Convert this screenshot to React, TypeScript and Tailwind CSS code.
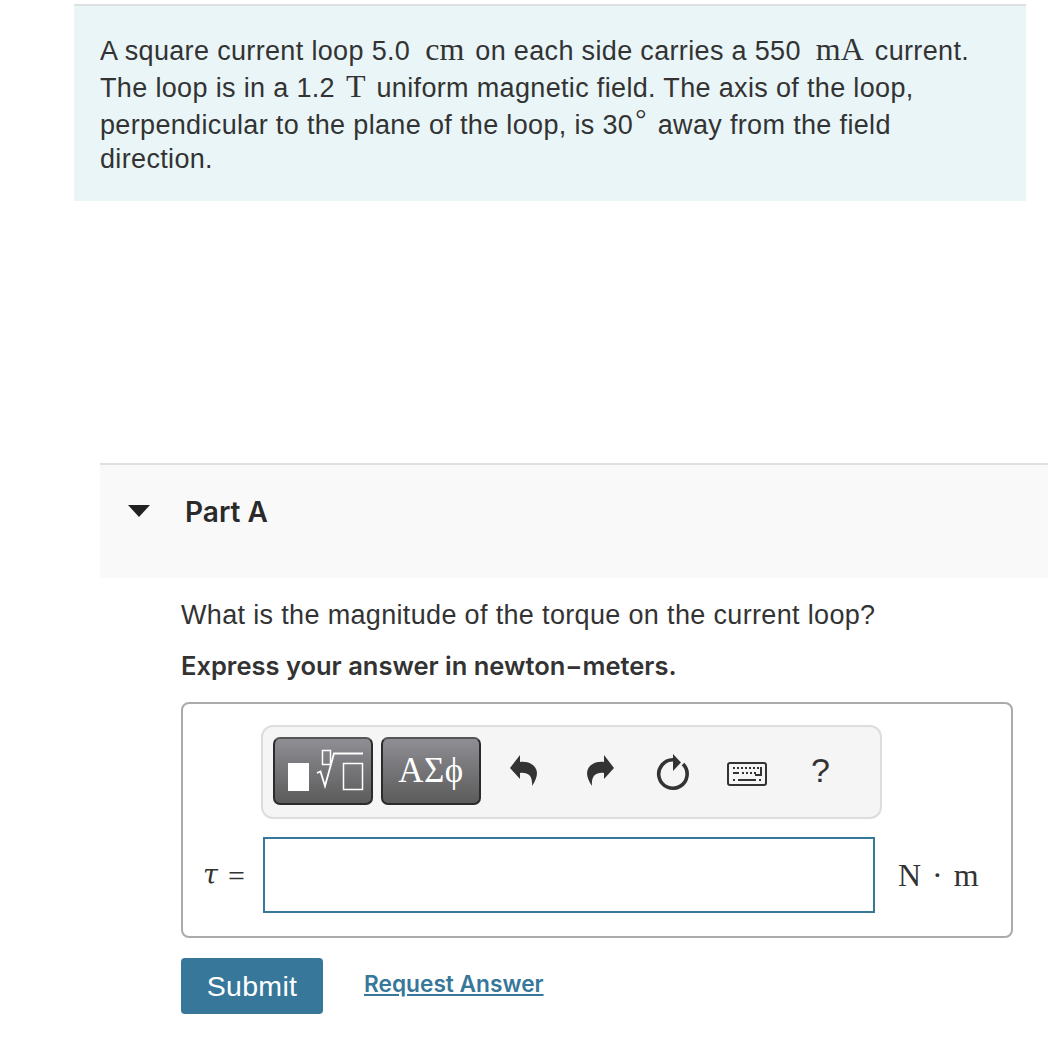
const sans = "font-['Liberation_Sans',Arial,sans-serif]";
const medium = "font-['Inter',sans-serif] font-semibold tracking-normal";
const Unit = ({ children, className = "" }: { children: React.ReactNode; className?: string }) => (
  <span className={`font-['Liberation_Serif',serif] text-[32px] leading-none tracking-normal ${className}`}>{children}</span>
);

function MathIcon() {
  return (
    <svg width="96" height="64" viewBox="0 0 96 64" fill="none" className="block">
      <rect x="13" y="24" width="21" height="28" fill="#fff" />
      <rect x="47.5" y="11.5" width="8" height="14" stroke="#fff" strokeWidth="1.5" />
      <path d="M42 34 L45.5 32.5 L50 47 L59 14.5 H88" stroke="#fff" strokeWidth="1.8" />
      <rect x="68.5" y="24.5" width="19" height="26" stroke="#fff" strokeWidth="1.5" />
    </svg>
  );
}

function Arrow({ flip = false, className = "" }: { flip?: boolean; className?: string }) {
  return (
    <svg width="27" height="31" viewBox="0 0 27 31" className={`block ${flip ? "-scale-x-100" : ""} ${className}`}>
      <path d="M10 0 L0 13 L10 24 V18 C18 17 23 21 22 31 C27 24 28 18 26 14 C24 9 17 6 10 7 Z" fill="#333" />
    </svg>
  );
}

function Refresh() {
  return (
    <svg width="34" height="38" viewBox="0 0 34 38" fill="none" className="block">
      <path d="M17 6.8 A14.2 14.2 0 1 0 27 11" stroke="#333" strokeWidth="3.6" />
      <path d="M17 1 L25 9.5 L17 18 Z" fill="#333" />
    </svg>
  );
}

function Keyboard() {
  const row = (y: number, xs: number[]) =>
    xs.map((x) => <rect key={`${x}-${y}`} x={x} y={y} width="2" height="2" fill="#333" />);
  return (
    <svg width="40" height="24" viewBox="0 0 40 24" fill="none" className="block">
      <rect x="1" y="1" width="38" height="22" rx="2" stroke="#333" strokeWidth="2" />
      {row(5, [6, 10, 14, 18, 22, 26, 30])}
      <rect x="6" y="10" width="6" height="2" fill="#333" />
      {row(10, [15, 19, 23, 27])}
      <rect x="33" y="5" width="2" height="8" fill="#333" />
      <rect x="28" y="12" width="7" height="2" fill="#333" />
      <rect x="6" y="17" width="2" height="2" fill="#333" />
      <rect x="11" y="17" width="18" height="2" fill="#333" />
      <rect x="32" y="17" width="2" height="2" fill="#333" />
    </svg>
  );
}

const btn =
  "w-[100px] h-[68px] mb-[2px] rounded-[7px] border-2 border-[#2b2b2b] border-t-[#555] bg-gradient-to-b from-[#8e8e94] to-[#5c5c5c] flex items-center justify-center";

export default function App() {
  return (
    <div className={`w-[1048px] h-[1060px] bg-white text-[#333] text-[27px] tracking-[0.34px] overflow-hidden ${sans}`}>
      <div className="pt-1 pl-[74px] pr-[22px]">
        <div className="h-[197px] border-t-2 border-[#e0e0e0] bg-[#e9f5f7] pl-[26px] pt-[27px] leading-[37px]">
          <div className="h-[37px] whitespace-nowrap">A square current loop 5.0<Unit className="ml-[15px] mr-[11px]">cm</Unit>on each side carries a 550<Unit className="ml-[15px] mr-[11px]">mA</Unit>current.</div>
          <div className="h-[37px] whitespace-nowrap">The loop is in a 1.2<Unit className="mx-[11px]">T</Unit>uniform magnetic field. The axis of the loop,</div>
          <div className="h-[34px] whitespace-nowrap">perpendicular to the plane of the loop, is 30<span className="relative -top-[6px] ml-[2px] mr-[11px] text-[28px] leading-none font-['Liberation_Serif',serif]">°</span>away from the field</div>
          <div className="h-[34px] whitespace-nowrap">direction.</div>
        </div>
      </div>

      <div className="mt-[262px] ml-[100px] h-[115px] border-t-2 border-[#e0e0e0] bg-[#f9f9f9] flex items-start pt-[29px]">
        <div className="ml-[28px] mt-[11px] w-0 h-0 border-x-[11px] border-x-transparent border-t-[12px] border-t-[#222]" />
        <div className={`ml-[35px] text-[#2a2a2a] leading-[36px] text-[28px] ${medium}`}>Part A</div>
      </div>

      <div className="ml-[181px] w-[832px]">
        <div className="mt-[18px] leading-[38px] h-[38px]">What is the magnitude of the torque on the current loop?</div>
        <div className={`mt-[13px] leading-[38px] h-[38px] text-[25.5px] ${medium}`}>Express your answer in newton−meters.</div>

        <div className="mt-[17px] h-[236px] border-2 border-[#aaa] rounded-[8px] pt-[21px] pl-[78px]">
          <div className="w-[621px] h-[94px] border-2 border-[#ddd] rounded-[12px] bg-[#f5f5f5] flex items-center pl-[10px] text-[#333]">
            <div className={btn}><MathIcon /></div>
            <div className={`${btn} ml-[8px] text-white font-['Liberation_Serif',serif] text-[35px] tracking-[0.5px]`}>ΑΣϕ</div>
            <Arrow className="ml-[29px] mb-[3px]" />
            <Arrow flip className="ml-[50px] mb-[3px]" />
            <div className="ml-[42px]"><Refresh /></div>
            <div className="ml-[37px] mt-[4px]"><Keyboard /></div>
            <div className="ml-[44px] mb-[4px] text-[34px] leading-none tracking-normal">?</div>
          </div>
          <div className="-ml-[78px] mt-[18px] flex items-center h-[76px]">
            <div className="ml-[20px] w-[60px] flex items-center whitespace-nowrap tracking-normal">
              <i className="w-[25px] font-['DejaVu_Serif',serif] text-[27px]">τ</i>
              <span className="font-['Liberation_Serif',serif] text-[30px]">=</span>
            </div>
            <div className="w-[612px] h-[76px] border-2 border-[#37779a] bg-white" />
            <div className="ml-[23px] font-['Liberation_Serif',serif] text-[32px] whitespace-nowrap tracking-normal">N<span className="mx-[11px]">·</span>m</div>
          </div>
        </div>

        <div className="mt-[20px] flex items-center">
          <div className="w-[142px] h-[56px] rounded-[4px] bg-[#37779a] text-white flex items-center justify-center text-[28.5px] pt-[1px]">Submit</div>
          <div className={`ml-[41px] -mt-[3px] text-[#37779a] underline text-[22.7px] ${medium}`}>Request Answer</div>
        </div>
      </div>
    </div>
  );
}
